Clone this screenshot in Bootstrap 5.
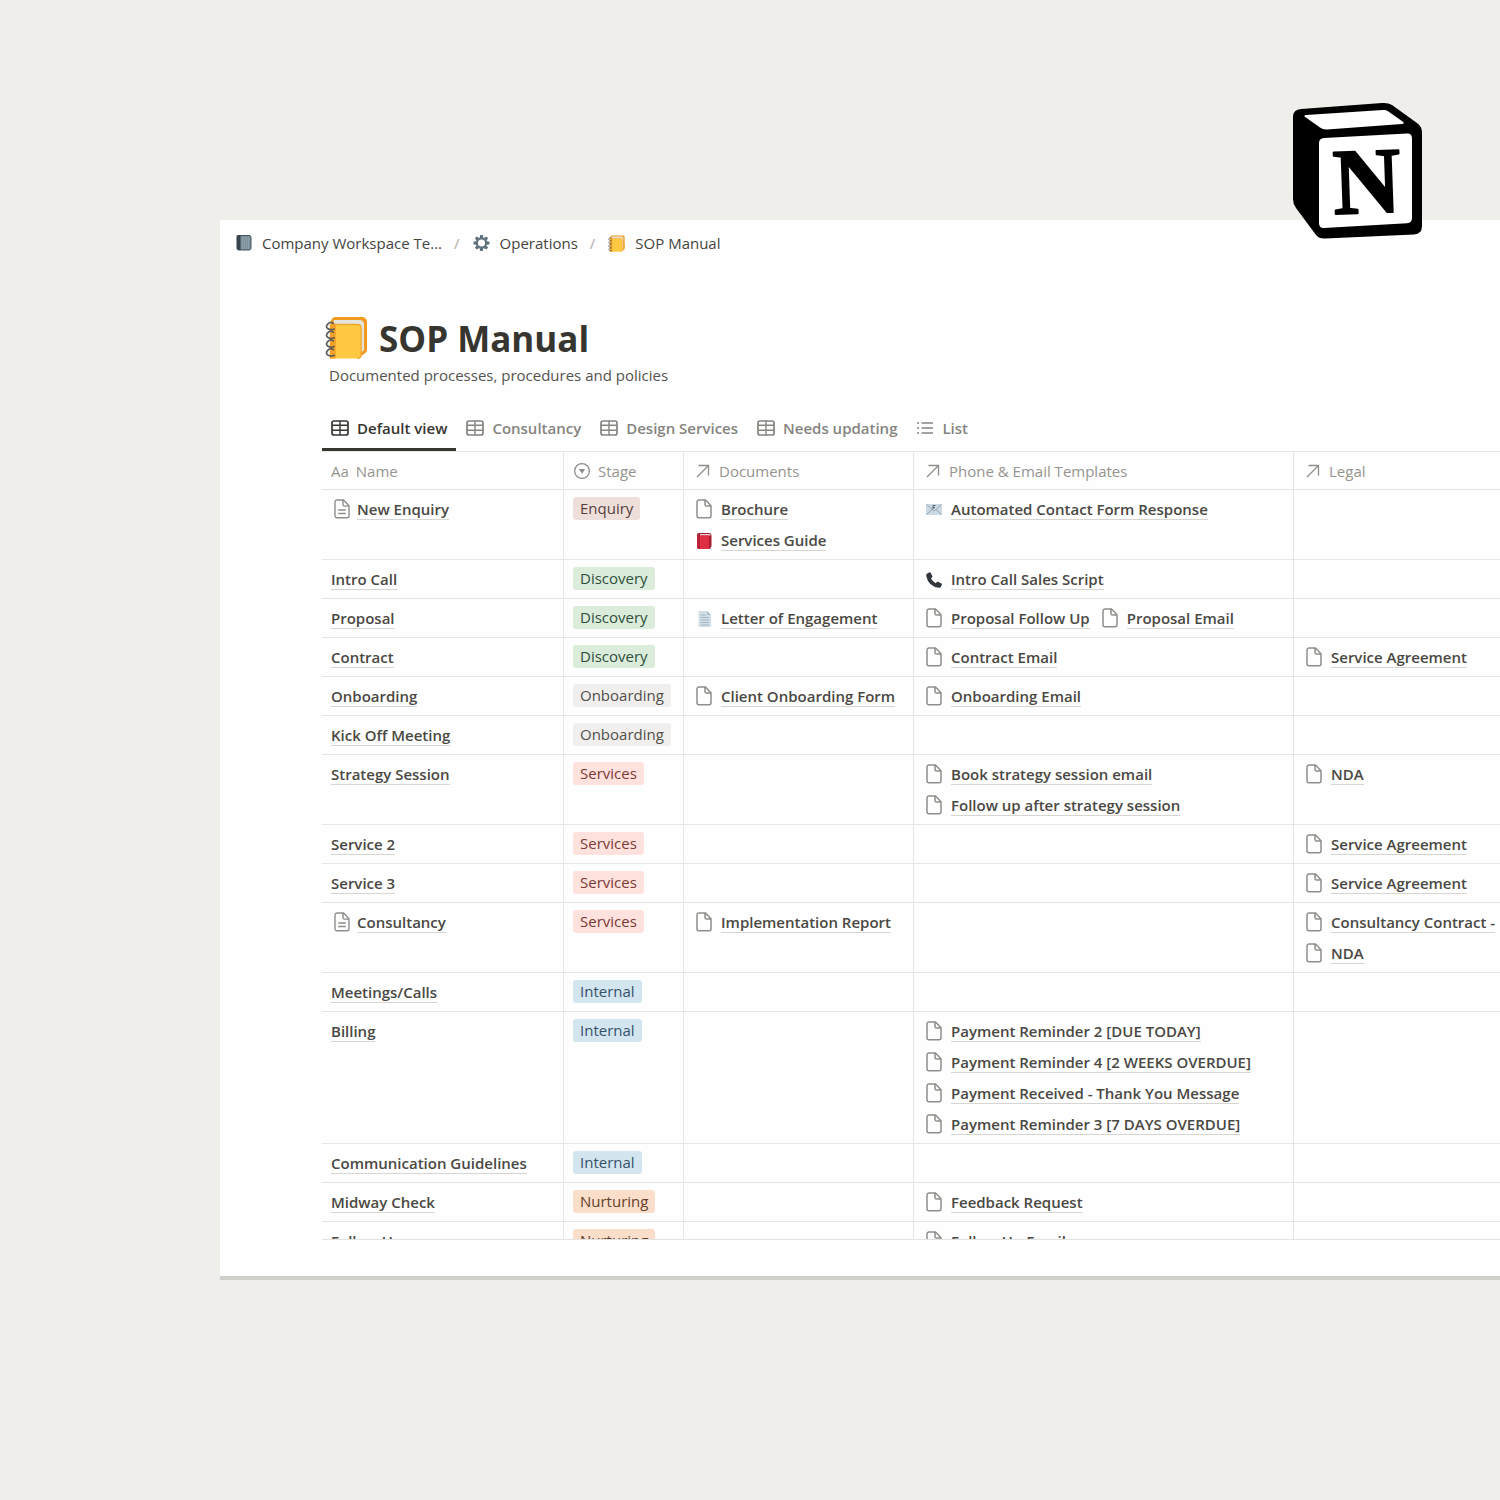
<!DOCTYPE html>
<html lang="en">
<head>
<meta charset="utf-8">
<meta name="viewport" content="width=device-width, initial-scale=1">
<title>SOP Manual</title>
<link href="https://cdn.jsdelivr.net/npm/bootstrap@5.3.0/dist/css/bootstrap.min.css" rel="stylesheet">
<style>
body{background:#efeeea;color:#37352f;font-family:"Open Sans","Noto Sans",sans-serif;font-size:15px;line-height:20px;overflow-x:hidden}
a{color:inherit;text-decoration:none}
svg{display:block;flex:none}
.workspace{margin:220px 0 220px 220px;background:#fefefe;border-bottom:4px solid #cfcfcb;padding-bottom:36px}
.crumbs{padding:13px 16px;gap:10px;color:#45443f}
.crumbs li{display:flex;align-items:center;gap:10px}
.crumbs .slash{color:#aeada9;margin:0 3px 0 2px}
.sheet{margin-left:102px}
.page-head{padding:49px 0 0 3px}
.page-head h1{font-size:35px;line-height:48px;font-weight:700;gap:11px}
.page-head h1 svg{margin-bottom:4px}
.page-head p{padding-left:4px;color:#55534e;line-height:24px}
.views{padding-top:20px;border-bottom:1px solid #e6e6e4;column-gap:1px}
.views .nav-link{display:flex;align-items:center;gap:8px;height:44px;padding:0 9px;background:none;color:#85847f;font-weight:600;border:0;border-bottom:3px solid transparent;border-radius:0}
.views .nav-link.active{color:#37352f;border-bottom-color:#37352f}
.grid-clip{max-height:788px;overflow:hidden;border-bottom:1px solid #e3e3e1}
.records{table-layout:fixed;width:100%;border-collapse:separate;border-spacing:0}
.records th,.records td{border-right:1px solid #e6e6e4;border-bottom:1px solid #e6e6e4;vertical-align:top;padding:4px 11px 3px 12px}
.records th:last-child,.records td:last-child{border-right:0;padding-right:0}
.records th{height:38px;padding-top:0;padding-bottom:0;vertical-align:middle;font-weight:400;color:#95948f}
.records th div{display:flex;align-items:center;gap:9px}
.records th:first-child,.records td:first-child,.records td:nth-child(2),.records th:nth-child(2){padding-left:9px;padding-right:9px}
.records th:first-child div{gap:7px}
.records th:nth-child(2) div{gap:7px}
.entry{display:flex;align-items:center;height:31px;gap:7px;font-weight:600;white-space:nowrap;color:#4a4843}
.entry svg{margin-left:3px;margin-bottom:2px}
.links{display:flex;flex-wrap:wrap;column-gap:12px;color:#4a4843}
.links a{display:flex;align-items:center;height:31px;gap:9px;font-weight:600;white-space:nowrap}
.links .doc{margin-bottom:2px}
.entry span,.links span{line-height:19px;border-bottom:1px solid #d6d5d2}
.stage{display:inline-block;line-height:23px;padding:0 7px;border-radius:3px;margin-top:3px;vertical-align:top;white-space:nowrap}
.s-brown{background:#eedfda;color:#59403a}.s-green{background:#dbecdb;color:#2f4f3c}.s-gray{background:#f0efed;color:#52504b}
.s-red{background:#ffe2dd;color:#7a3a35}.s-blue{background:#d3e5ef;color:#35526a}.s-orange{background:#fadec9;color:#64402a}
.brand{position:absolute;top:102px;right:77px}
.brand text{font-family:"Liberation Serif",serif;font-weight:700;font-size:94px;stroke:#000;stroke-width:2px;stroke-linejoin:round}
.c-name{width:242px}.c-stage{width:120px}.c-docs{width:230px}.c-phone{width:380px}
</style>
<script src="https://cdn.jsdelivr.net/npm/bootstrap@5.3.0/dist/js/bootstrap.bundle.min.js" defer></script>
</head>
<body>
<svg width="0" height="0" class="position-absolute" aria-hidden="true">
 <symbol id="page" viewBox="0 0 16 20"><path d="M3.2 1h6.3L15 6.700V16.800a2 2 0 0 1-2 2H3a2 2 0 0 1-2-2V3a2 2 0 0 1 2.200-2zM9 1.300V5.500a1.600 1.600 0 0 0 1.600 1.600H14.800" fill="none" stroke="#8f8e8a" stroke-width="1.500"/></symbol>
 <symbol id="pagetext" viewBox="0 0 16 20"><path d="M3.200 1h6.300L15 6.700V16.800a2 2 0 0 1-2 2H3a2 2 0 0 1-2-2V3a2 2 0 0 1 2.200-2zM9 1.300V5.500a1.600 1.600 0 0 0 1.600 1.600H14.800M4.200 11h7.600M4.200 14.500h7.600" fill="none" stroke="#8f8e8a" stroke-width="1.400"/></symbol>
 <symbol id="tableicon" viewBox="0 0 18 16"><rect x="1" y="1" width="16" height="14" rx="2" fill="none" stroke="currentColor" stroke-width="1.700"/><path d="M1 5.300h16M1 10.200h16M9 1v14" stroke="currentColor" stroke-width="1.400"/></symbol>
 <symbol id="arrow" viewBox="0 0 14 14"><path d="M1 13 12 2M2.500 1.500h10v10" fill="none" stroke="#8f8e8a" stroke-width="1.300"/></symbol>
 <symbol id="ledger" viewBox="0 0 44 44"><rect x="6" y="1" width="37" height="36" rx="5" fill="#f19a1f"/><path d="M9 4h26q5 0 5 5v27l-3 5-3-30H9z" fill="#e4e4df"/><path d="M5 8.500h28q4 0 4 4v27q0 4-4 4H5z" fill="#ffc843"/><path d="M6 8.500h27q4 0 4 4v27q0 4-4 4" fill="none" stroke="#f2a42a" stroke-width="1.200"/><path d="M43 30v4q0 3-3 5l-3 2v-4l3-2V8z" fill="#f19a1f"/><path d="M5 8h6v35.500H5z" fill="#f5a229"/><g fill="none" stroke="#5a5a58" stroke-width="1.700"><path d="M10 13q-4 2-7 0t0-5 6 0"/><path d="M10 22q-4 2-7 0t0-5 6 0"/><path d="M10 31q-4 2-7 0t0-5 6 0"/><path d="M10 40q-4 2-7 0t0-5 6 0"/></g></symbol>
</svg>

<main class="workspace">
 <nav aria-label="Breadcrumb">
  <ol class="crumbs list-unstyled d-flex mb-0">
   <li><svg width="16" height="18" viewBox="0 0 16 18"><rect x="1" y="1" width="14" height="15" rx="2" fill="#7d8f9a"/><path d="M2 1h2.500v15H2q-1.500 0-1.500-2V3Q.5 1 2 1z" fill="#37444d"/><path d="M4 1.500h9q2 0 2 2V14q0 2-2 2H2" fill="none" stroke="#46545d"/><path d="M6 4h7M6 6h7M6 8h7M6 10h7M6 12h7M6 14h7" stroke="#9eb0ba" stroke-dasharray="1 1"/></svg><a href="#">Company Workspace Te...</a></li>
   <li class="slash" aria-hidden="true">/</li>
   <li><svg width="17" height="18" viewBox="-8.500 -9 17 18"><circle r="4.600" fill="none" stroke="#5f717c" stroke-width="2"/><path id="t" d="M-1.300-8h2.600l.6 3h-3.800zM-1.300 8h2.600l.6-3h-3.800z" fill="#5f717c"/><use href="#t" transform="rotate(45)"/><use href="#t" transform="rotate(90)"/><use href="#t" transform="rotate(135)"/></svg><a href="#">Operations</a></li>
   <li class="slash" aria-hidden="true">/</li>
   <li><svg width="17" height="17"><use href="#ledger"/></svg><a href="#" aria-current="page">SOP Manual</a></li>
  </ol>
 </nav>

 <div class="sheet">
  <header class="page-head">
   <h1 class="d-flex align-items-center mb-0"><svg width="43" height="43"><use href="#ledger"/></svg>SOP Manual</h1>
   <p class="mb-0">Documented processes, procedures and policies</p>
  </header>

  <ul class="views nav flex-nowrap text-nowrap">
   <li class="nav-item"><button type="button" class="nav-link active"><svg width="18" height="16"><use href="#tableicon"/></svg>Default view</button></li>
   <li class="nav-item"><button type="button" class="nav-link"><svg width="18" height="16"><use href="#tableicon"/></svg>Consultancy</button></li>
   <li class="nav-item"><button type="button" class="nav-link"><svg width="18" height="16"><use href="#tableicon"/></svg>Design Services</button></li>
   <li class="nav-item"><button type="button" class="nav-link"><svg width="18" height="16"><use href="#tableicon"/></svg>Needs updating</button></li>
   <li class="nav-item"><button type="button" class="nav-link"><svg width="18" height="16" viewBox="0 0 18 16"><path d="M5.500 3H17M5.500 8H17M5.500 13H17M1 3h2M1 8h2M1 13h2" stroke="currentColor" stroke-width="1.700"/></svg>List</button></li>
  </ul>

  <div class="grid-clip">
   <table class="records">
    <thead><tr>
     <th scope="col" class="c-name"><div><span>Aa</span>Name</div></th>
     <th scope="col" class="c-stage"><div><svg width="18" height="18" viewBox="0 0 18 18"><circle cx="9" cy="9" r="7.400" fill="none" stroke="#8f8e8a" stroke-width="1.300"/><path d="M5.800 7h6.400L9 11.800z" fill="#8f8e8a"/></svg>Stage</div></th>
     <th scope="col" class="c-docs"><div><svg width="14" height="14"><use href="#arrow"/></svg>Documents</div></th>
     <th scope="col" class="c-phone"><div><svg width="14" height="14"><use href="#arrow"/></svg>Phone &amp; Email Templates</div></th>
     <th scope="col"><div><svg width="14" height="14"><use href="#arrow"/></svg>Legal</div></th>
    </tr></thead>
    <tbody>
     <tr><td><a class="entry" href="#"><svg width="16" height="20"><use href="#pagetext"/></svg><span>New Enquiry</span></a></td><td><span class="stage s-brown">Enquiry</span></td>
      <td><div class="links"><a href="#"><svg class="doc" width="16" height="20"><use href="#page"/></svg><span>Brochure</span></a><a href="#"><svg width="16" height="18" viewBox="0 0 16 18"><path d="M3 1h11l1.500 2v11L14 17H3q-2 0-2-2V3q0-2 2-2z" fill="#a91d33"/><path d="M4 2h10l.8 1.500H4z" fill="#eccfd3"/><path d="M1.500 3.500H13V17H3q-1.500 0-1.500-2z" fill="#dd2e44"/><path d="M1.500 3.500H4V17H3q-1.500 0-1.500-2z" fill="#b8213a"/></svg><span>Services Guide</span></a></div></td>
      <td><div class="links"><a href="#"><svg width="16" height="14" viewBox="0 0 16 14"><rect y="1" width="16" height="11" rx="1" fill="#ccd9e2"/><path d="M.5 1.500 8 8l7.500-6.500M.5 11.500 6 6.500M15.500 11.500 10 6.500" fill="none" stroke="#94a7b5"/><path d="M9.500 2.500H7v4M7 4.500h2" fill="none" stroke="#4f6373"/></svg><span>Automated Contact Form Response</span></a></div></td><td></td></tr>
     <tr><td><a class="entry" href="#"><span>Intro Call</span></a></td><td><span class="stage s-green">Discovery</span></td><td></td>
      <td><div class="links"><a href="#"><svg width="16" height="16" viewBox="0 0 16 16"><path d="M1 1.800 3.500.3q.8-.3 1.200.5L6.300 4q.3.900-.4 1.400L4.900 6.200Q6.500 9.500 9.800 11.200l1-1.100q.6-.6 1.400-.3l3.200 1.600q.7.400.5 1.200L15 14.800q-.7 1.100-2.200.9Q2.500 14.500.2 4 0 2.500 1 1.800z" fill="#31373d"/></svg><span>Intro Call Sales Script</span></a></div></td><td></td></tr>
     <tr><td><a class="entry" href="#"><span>Proposal</span></a></td><td><span class="stage s-green">Discovery</span></td>
      <td><div class="links"><a href="#"><svg width="16" height="18" viewBox="0 0 16 18"><path d="M2.500 1H11l4 4v12H2.500z" fill="#d3dfe7"/><path d="M11 1v4h4z" fill="#a9bcc9"/><path d="M4.500 5h5M4.500 7.500h8.500M4.500 10h8.500M4.500 12.500h8.500M4.500 15h8.500" stroke="#a3b7c5" stroke-width="1.200"/></svg><span>Letter of Engagement</span></a></div></td>
      <td><div class="links"><a href="#"><svg class="doc" width="16" height="20"><use href="#page"/></svg><span>Proposal Follow Up</span></a><a href="#"><svg class="doc" width="16" height="20"><use href="#page"/></svg><span>Proposal Email</span></a></div></td><td></td></tr>
     <tr><td><a class="entry" href="#"><span>Contract</span></a></td><td><span class="stage s-green">Discovery</span></td><td></td>
      <td><div class="links"><a href="#"><svg class="doc" width="16" height="20"><use href="#page"/></svg><span>Contract Email</span></a></div></td>
      <td><div class="links"><a href="#"><svg class="doc" width="16" height="20"><use href="#page"/></svg><span>Service Agreement</span></a></div></td></tr>
     <tr><td><a class="entry" href="#"><span>Onboarding</span></a></td><td><span class="stage s-gray">Onboarding</span></td>
      <td><div class="links"><a href="#"><svg class="doc" width="16" height="20"><use href="#page"/></svg><span>Client Onboarding Form</span></a></div></td>
      <td><div class="links"><a href="#"><svg class="doc" width="16" height="20"><use href="#page"/></svg><span>Onboarding Email</span></a></div></td><td></td></tr>
     <tr><td><a class="entry" href="#"><span>Kick Off Meeting</span></a></td><td><span class="stage s-gray">Onboarding</span></td><td></td><td></td><td></td></tr>
     <tr><td><a class="entry" href="#"><span>Strategy Session</span></a></td><td><span class="stage s-red">Services</span></td><td></td>
      <td><div class="links"><a href="#"><svg class="doc" width="16" height="20"><use href="#page"/></svg><span>Book strategy session email</span></a><a href="#"><svg class="doc" width="16" height="20"><use href="#page"/></svg><span>Follow up after strategy session</span></a></div></td>
      <td><div class="links"><a href="#"><svg class="doc" width="16" height="20"><use href="#page"/></svg><span>NDA</span></a></div></td></tr>
     <tr><td><a class="entry" href="#"><span>Service 2</span></a></td><td><span class="stage s-red">Services</span></td><td></td><td></td>
      <td><div class="links"><a href="#"><svg class="doc" width="16" height="20"><use href="#page"/></svg><span>Service Agreement</span></a></div></td></tr>
     <tr><td><a class="entry" href="#"><span>Service 3</span></a></td><td><span class="stage s-red">Services</span></td><td></td><td></td>
      <td><div class="links"><a href="#"><svg class="doc" width="16" height="20"><use href="#page"/></svg><span>Service Agreement</span></a></div></td></tr>
     <tr><td><a class="entry" href="#"><svg width="16" height="20"><use href="#pagetext"/></svg><span>Consultancy</span></a></td><td><span class="stage s-red">Services</span></td>
      <td><div class="links"><a href="#"><svg class="doc" width="16" height="20"><use href="#page"/></svg><span>Implementation Report</span></a></div></td><td></td>
      <td><div class="links"><a href="#"><svg class="doc" width="16" height="20"><use href="#page"/></svg><span>Consultancy Contract -</span></a><a href="#"><svg class="doc" width="16" height="20"><use href="#page"/></svg><span>NDA</span></a></div></td></tr>
     <tr><td><a class="entry" href="#"><span>Meetings/Calls</span></a></td><td><span class="stage s-blue">Internal</span></td><td></td><td></td><td></td></tr>
     <tr><td><a class="entry" href="#"><span>Billing</span></a></td><td><span class="stage s-blue">Internal</span></td><td></td>
      <td><div class="links"><a href="#"><svg class="doc" width="16" height="20"><use href="#page"/></svg><span>Payment Reminder 2 [DUE TODAY]</span></a><a href="#"><svg class="doc" width="16" height="20"><use href="#page"/></svg><span>Payment Reminder 4 [2 WEEKS OVERDUE]</span></a><a href="#"><svg class="doc" width="16" height="20"><use href="#page"/></svg><span>Payment Received - Thank You Message</span></a><a href="#"><svg class="doc" width="16" height="20"><use href="#page"/></svg><span>Payment Reminder 3 [7 DAYS OVERDUE]</span></a></div></td><td></td></tr>
     <tr><td><a class="entry" href="#"><span>Communication Guidelines</span></a></td><td><span class="stage s-blue">Internal</span></td><td></td><td></td><td></td></tr>
     <tr><td><a class="entry" href="#"><span>Midway Check</span></a></td><td><span class="stage s-orange">Nurturing</span></td><td></td>
      <td><div class="links"><a href="#"><svg class="doc" width="16" height="20"><use href="#page"/></svg><span>Feedback Request</span></a></div></td><td></td></tr>
     <tr><td><a class="entry" href="#"><span>Follow Up</span></a></td><td><span class="stage s-orange">Nurturing</span></td><td></td>
      <td><div class="links"><a href="#"><svg class="doc" width="16" height="20"><use href="#page"/></svg><span>Follow Up Email</span></a></div></td><td></td></tr>
    </tbody>
   </table>
  </div>
 </div>
</main>

<svg class="brand" width="131" height="137" viewBox="0 0 131 137" role="img" aria-label="Notion">
 <path d="M9 7 90 1q6-.5 10 2l25 18q5 3.500 5 9v94q0 8-8 8.500L33 136.500q-6 .3-9-3.500L4 106q-3-4-3-9V15q0-7.500 8-8z" fill="#000"/>
 <path d="M14 13 91 8q3-.2 5 1.200l15 10.600q2 2-1 2.200L35 27.500q-4 .3-7-2L12.500 14.500q-.8-1.300 1.500-1.500z" fill="#fff"/>
 <path d="M32 36 115 31.500q5-.3 5 5V116q0 5-5 5.300L32 126q-5 .3-5-5V41q0-4.700 5-5z" fill="#fff"/>
 <text x="42" y="112" transform="rotate(-2 42 112)">N</text>
</svg>
</body>
</html>
